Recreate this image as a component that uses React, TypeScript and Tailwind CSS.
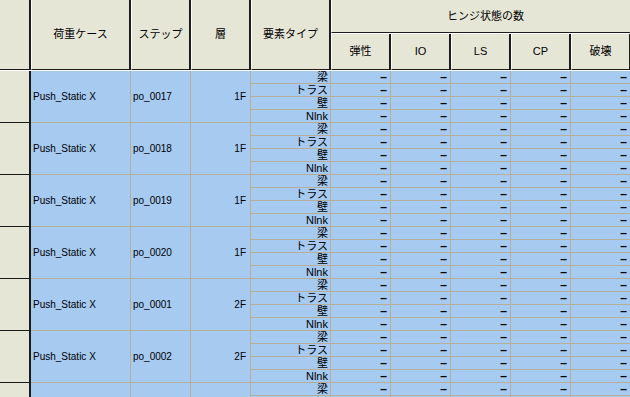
const FONT = "font-['Liberation_Sans','Noto_Sans_CJK_JP',sans-serif]"

const groups = [
  { load: "Push_Static X", step: "po_0017", story: "1F", rows: 4 },
  { load: "Push_Static X", step: "po_0018", story: "1F", rows: 4 },
  { load: "Push_Static X", step: "po_0019", story: "1F", rows: 4 },
  { load: "Push_Static X", step: "po_0020", story: "1F", rows: 4 },
  { load: "Push_Static X", step: "po_0001", story: "2F", rows: 4 },
  { load: "Push_Static X", step: "po_0002", story: "2F", rows: 4 },
  // only the top of this one is on screen
  { load: "", step: "", story: "", rows: 1 },
]

const types = ["梁", "トラス", "壁", "Nlnk"]
const states = ["弾性", "IO", "LS", "CP", "破壊"]

function HeadCell({ label, className }: { label: string; className: string }) {
  return (
    <div
      className={`flex shrink-0 items-center justify-center border-r-2 border-b border-[#1c1c1c] bg-[#e6e6d7] text-[11px] text-black ${className}`}
    >
      {label}
    </div>
  )
}

export default function App() {
  return (
    <div className={`h-[397px] w-[630px] overflow-hidden bg-white ${FONT}`}>
      <div className="flex h-[70px] w-[640px]">
        <HeadCell label="" className="h-[70px] w-[31px]" />
        <HeadCell label="荷重ケース" className="h-[70px] w-[100px] border-l border-l-white" />
        <HeadCell label="ステップ" className="h-[70px] w-[60px] border-l border-l-white" />
        <HeadCell label="層" className="h-[70px] w-[60px] border-l border-l-white" />
        <HeadCell label="要素タイプ" className="h-[70px] w-[80px] border-l border-l-white" />
        <div className="flex w-[310px] shrink-0 flex-col">
          <HeadCell label="ヒンジ状態の数" className="h-[33px] w-[310px] border-l border-l-white" />
          <div className="flex border-t border-white">
            {states.map((s) => (
              <HeadCell key={s} label={s} className="h-[36px] w-[60px] border-l border-l-white" />
            ))}
          </div>
        </div>
      </div>

      <div className="w-[640px] border-t border-white">
        {groups.map((g, gi) => (
          <div key={gi} className="flex h-[52px]">
            <div className="w-[31px] shrink-0 border-r-2 border-b border-[#1c1c1c] bg-[#e6e6d7]" />
            <div className="flex w-[100px] shrink-0 items-center border-r border-b border-[#b5ae98] bg-[#a6caf0] pl-[2px] text-[10px] text-black">
              {g.load}
            </div>
            <div className="flex w-[60px] shrink-0 items-center border-r border-b border-[#b5ae98] bg-[#a6caf0] pl-[2px] text-[10px] text-black">
              {g.step}
            </div>
            <div className="flex w-[60px] shrink-0 items-center justify-end border-r border-b border-[#b5ae98] bg-[#a6caf0] pr-[4px] text-[10px] text-black">
              {g.story}
            </div>
            <div className="flex w-[380px] shrink-0 flex-col bg-[#a6caf0]">
              {types.slice(0, g.rows).map((t) => (
                <div key={t} className="flex h-[13px]">
                  <div className="flex w-[80px] shrink-0 items-center justify-end border-r border-b border-[#b5ae98] bg-[#a6caf0] pr-[2px] text-[11px] leading-none text-black">
                    {t}
                  </div>
                  {states.map((s) => (
                    <div
                      key={s}
                      className="flex w-[60px] shrink-0 items-center justify-end border-r border-b border-[#b5ae98] bg-[#a6caf0] pr-[3px] text-[12px] font-bold leading-none text-black"
                    >
                      –
                    </div>
                  ))}
                </div>
              ))}
              {g.rows < 4 && (
                <div className="flex h-[13px]">
                  <div className="w-[80px] shrink-0 border-r border-[#b5ae98]" />
                  {states.map((s) => (
                    <div key={s} className="w-[60px] shrink-0 border-r border-[#b5ae98]" />
                  ))}
                </div>
              )}
            </div>
          </div>
        ))}
      </div>
    </div>
  )
}
